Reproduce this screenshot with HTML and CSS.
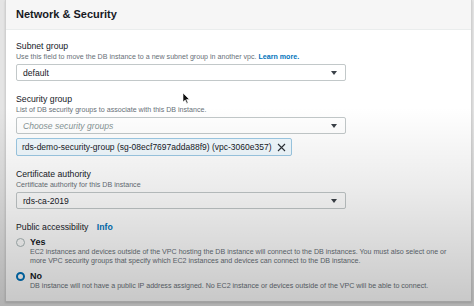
FILE: index.html
```html
<!DOCTYPE html>
<html lang="en">
<head>
    <meta charset="UTF-8">
    <title>Network &amp; Security</title>
    <link rel="stylesheet" href="styles.css">
</head>
<body>
    <div class="panel">
        <div class="panel-head">
            <h2>Network &amp; Security</h2>
        </div>
        <div class="panel-body">
            <div class="field">
                <div class="label">Subnet group</div>
                <div class="desc">Use this field to move the DB instance to a new subnet group in another vpc. <a href="#">Learn more.</a></div>
                <div class="select">
                    <span>default</span>
                    <span class="caret"></span>
                </div>
            </div>
            <div class="field">
                <div class="label">Security group</div>
                <div class="desc">List of DB security groups to associate with this DB instance.</div>
                <div class="select">
                    <span class="placeholder">Choose security groups</span>
                    <span class="caret"></span>
                </div>
                <div class="chip">
                    <span>rds-demo-security-group (sg-08ecf7697adda88f9) (vpc-3060e357)</span>
                    <svg class="chip-x" width="9" height="9" viewBox="0 0 9 9">
                        <path d="M1 1 L8 8 M8 1 L1 8" stroke="#2b3036" stroke-width="1.1" fill="none"/>
                    </svg>
                </div>
            </div>
            <div class="field">
                <div class="label">Certificate authority</div>
                <div class="desc">Certificate authority for this DB instance</div>
                <div class="select">
                    <span>rds-ca-2019</span>
                    <span class="caret"></span>
                </div>
            </div>
            <div class="field">
                <div class="label">Public accessibility <a href="#" class="info">Info</a></div>
                <div class="radio-row">
                    <span class="radio"></span>
                    <div>
                        <div class="radio-label">Yes</div>
                        <div class="desc nowrap">EC2 instances and devices outside of the VPC hosting the DB instance will connect to the DB instances. You must also select one or<br>more VPC security groups that specify which EC2 instances and devices can connect to the DB instance.</div>
                    </div>
                </div>
                <div class="radio-row">
                    <span class="radio checked"></span>
                    <div>
                        <div class="radio-label">No</div>
                        <div class="desc">DB instance will not have a public IP address assigned. No EC2 instance or devices outside of the VPC will be able to connect.</div>
                    </div>
                </div>
            </div>
        </div>
    </div>
    <svg class="cursor" width="8" height="12" viewBox="0 0 8 12">
        <path d="M1 1 L1 10 L3.2 8 L4.8 11.4 L6 10.8 L4.5 7.6 L7.4 7.4 Z" fill="#111" stroke="#fff" stroke-width="0.6"/>
    </svg>
</body>
</html>
```

FILE: styles.css
```css
html, body {
    margin: 0;
    padding: 0;
}
body {
    background: #e4e4e4;
    font-family: 'Liberation Sans', Arial, sans-serif;
    color: #16191f;
    width: 474px;
    height: 306px;
    overflow: hidden;
    position: relative;
    padding: 0 2px 0 5px;
    box-sizing: border-box;
}
body::after {
    content: '';
    position: absolute;
    left: 0;
    top: 0;
    right: 0;
    bottom: 0;
    background: linear-gradient(to bottom, rgba(0, 0, 0, 0) 0, rgba(0, 0, 0, 0) 35%, rgba(0, 0, 0, 0.08) 62%, rgba(0, 0, 0, 0.22) 100%);
    pointer-events: none;
}
.panel {
    background: #fff;
    border: 1px solid #d0d0d0;
    border-top: none;
    height: 302px;
    box-sizing: border-box;
    box-shadow: 0 1px 2px rgba(0, 0, 0, 0.15);
}
.panel-head {
    height: 30px;
    background: #f6f6f6;
    border-bottom: 1px solid #eaeded;
    display: flex;
    align-items: center;
    padding: 0 0 2px 10px;
    box-sizing: border-box;
}
.panel-head h2 {
    margin: 0;
    font-size: 11px;
    font-weight: bold;
    color: #16191f;
}
.panel-body {
    padding: 10.5px 10px 0 10px;
}
.field {
    margin-bottom: 12.5px;
}
.label {
    font-size: 8.7px;
    line-height: 11px;
}
.desc {
    font-size: 7.1px;
    line-height: 9px;
    color: #687078;
    margin-top: 1px;
}
.desc a {
    color: #0073bb;
    font-weight: bold;
    text-decoration: none;
}
.select {
    margin-top: 2.5px;
    width: 330px;
    height: 17px;
    box-sizing: border-box;
    border: 1px solid #c2c8c9;
    border-radius: 2px;
    background: #fff;
    display: flex;
    align-items: center;
    justify-content: space-between;
    padding: 0 8px 0 6px;
    font-size: 8.6px;
}
.placeholder {
    color: #879596;
    font-style: italic;
}
.caret {
    width: 0;
    height: 0;
    border-left: 3.5px solid transparent;
    border-right: 3.5px solid transparent;
    border-top: 4.5px solid #3b4148;
}
.chip {
    margin-top: 4px;
    display: flex;
    width: fit-content;
    align-items: center;
    height: 18px;
    box-sizing: border-box;
    border: 1px solid #9cc9e4;
    border-radius: 2px;
    background: #f1faff;
    padding: 0 5px 0 5px;
    font-size: 8.5px;
    gap: 6px;
}
.chip-x {
    display: block;
}
.info {
    color: #0073bb;
    font-weight: bold;
    text-decoration: none;
    margin-left: 6px;
}
.radio-row {
    display: flex;
    align-items: flex-start;
    margin-top: 4px;
}
.radio-row + .radio-row {
    margin-top: 5.5px;
}
.radio-row .desc {
    margin-top: 0;
}
.desc.nowrap {
    white-space: nowrap;
}
.radio {
    width: 9px;
    height: 9px;
    box-sizing: border-box;
    border-radius: 50%;
    border: 1px solid #aab7b8;
    background: #fff;
    margin: 1px 5px 0 0;
    flex: none;
}
.radio.checked {
    border: 2.5px solid #0073bb;
}
.radio-label {
    font-size: 9px;
    line-height: 11px;
    font-weight: bold;
}
.cursor {
    position: absolute;
    left: 182px;
    top: 92px;
}
```
